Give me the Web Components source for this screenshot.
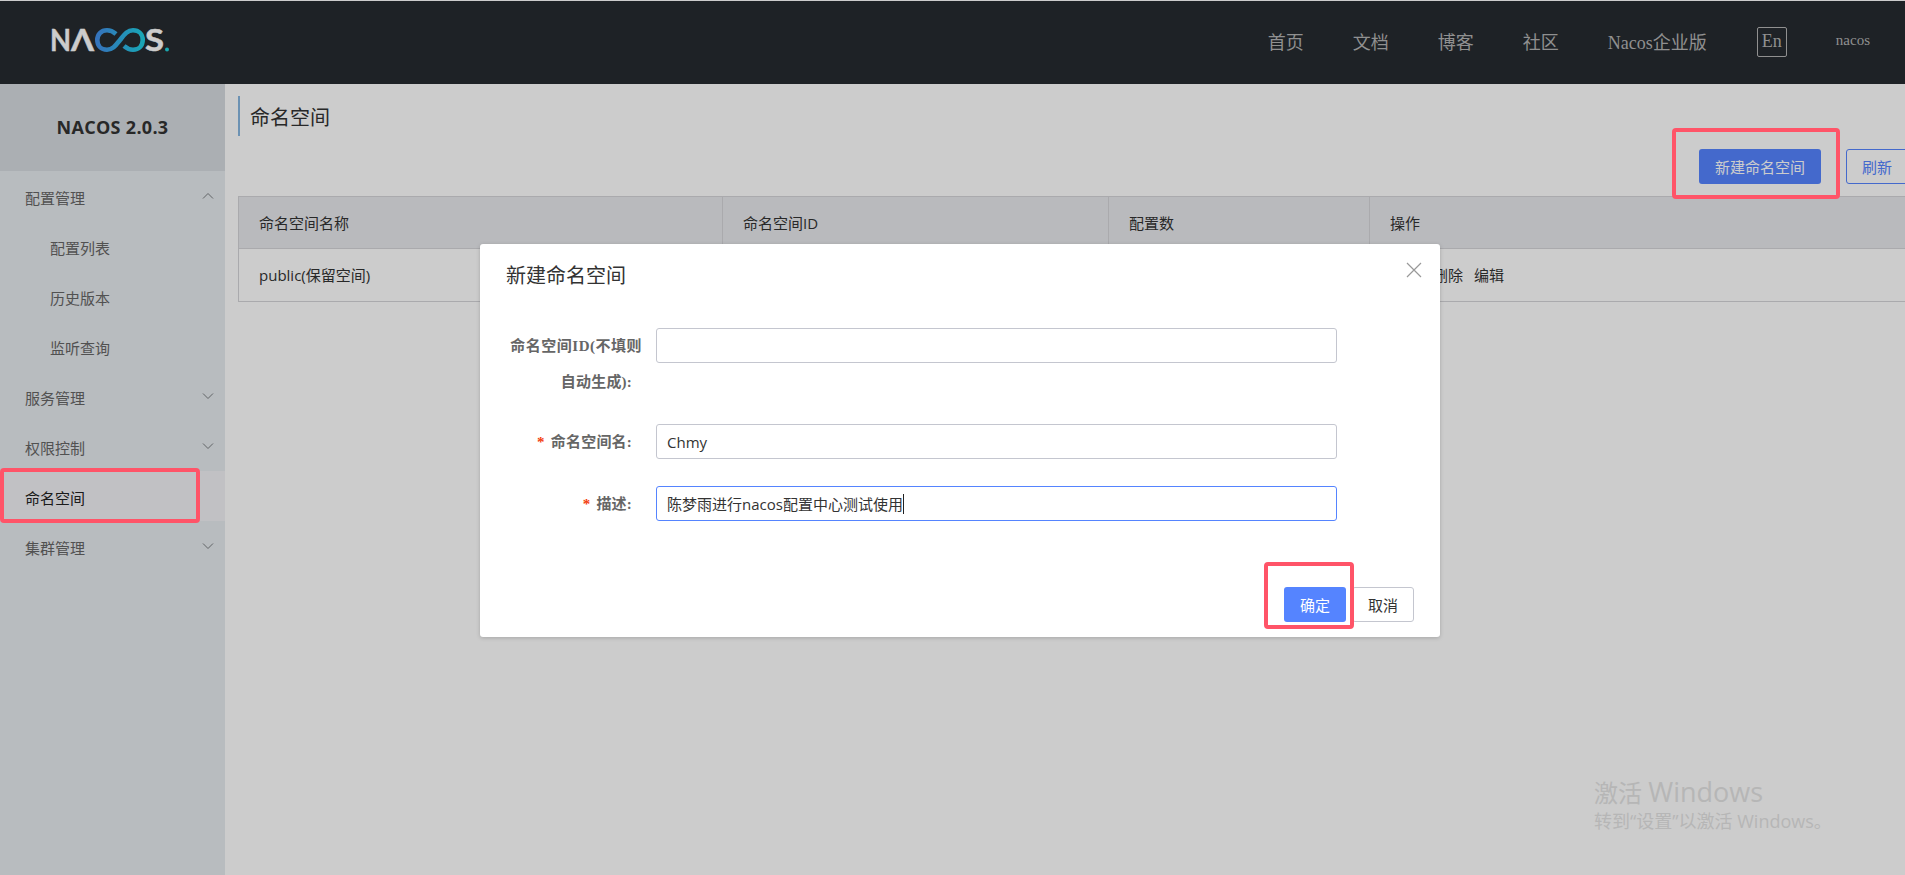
<!DOCTYPE html>
<html lang="zh">
<head>
<meta charset="utf-8">
<title>Nacos</title>
<style>
html, body { margin: 0; height: 875px; overflow: hidden; background: #fff; }
body { position: relative; font-family: "Open Sans", "Noto Sans CJK SC", sans-serif; font-size: 15px; color: #333; }
</style>
</head>
<body>
<top-header></top-header>
<div style="display:flex;height:791px">
  <side-menu>
    <side-item>配置管理<chev-icon slot="end" dir="up"></chev-icon></side-item>
    <side-item sub>配置列表</side-item>
    <side-item sub>历史版本</side-item>
    <side-item sub>监听查询</side-item>
    <side-item>服务管理<chev-icon slot="end"></chev-icon></side-item>
    <side-item>权限控制<chev-icon slot="end"></chev-icon></side-item>
    <side-item active>命名空间</side-item>
    <side-item>集群管理<chev-icon slot="end"></chev-icon></side-item>
  </side-menu>
  <namespace-page></namespace-page>
</div>
<dim-mask></dim-mask>
<namespace-dialog></namespace-dialog>
<red-mark style="left:1672px;top:128px;width:168px;height:71px"></red-mark>
<red-mark style="left:0;top:468px;width:200px;height:55px"></red-mark>
<red-mark style="left:1264px;top:562px;width:90px;height:67px"></red-mark>
<win-mark></win-mark>

<script>
const CJK = '"Noto Sans CJK SC", sans-serif'

class TopHeader extends HTMLElement {
    constructor() {
        super()
        this.attachShadow({ mode: "open" })
        this.shadowRoot.innerHTML = `
        <style>
        :host { display: flex; align-items: center; height: 83px; border-top: 1px solid #fff; background: #262b30; color: #b4b4b4; font: 18px "Liberation Serif", ${CJK}; }
        svg { display: block; margin: -6px 0 0 51px; }
        text { font-family: "Lato", "Open Sans", sans-serif; font-weight: 700; fill: #fff; stroke: #fff; stroke-width: .5; }
        nav { display: flex; align-items: center; margin-left: auto; gap: 49px; padding: 0 35px 4px 0; }
        .lang { box-sizing: border-box; width: 30px; height: 30px; line-height: 26px; text-align: center; border: 1px solid #b4b4b4; border-radius: 2px; margin: 2px 0 0 1px; }
        .user { font-size: 15px; }
        </style>
        <svg width="118" height="44" viewBox="0 -10 118 44">
          <defs><linearGradient id="inf" x1="0" x2="1" y1="0" y2="0"><stop offset="0" stop-color="#4390ea"/><stop offset="1" stop-color="#1fcfe4"/></linearGradient></defs>
          <text x="-1" y="23" font-size="31" textLength="21" lengthAdjust="spacingAndGlyphs">N</text>
          <text x="20" y="23" font-size="31" textLength="23" lengthAdjust="spacingAndGlyphs">Λ</text>
          <path transform="translate(44 0)" d="M21 6C18 3.400 15 2.300 12 2.300C6 2.300 2.300 6.500 2.300 12C2.300 17.500 6 21.700 12 21.700C18 21.700 21 17 25 12C29 7 32 2.300 38 2.300C44 2.300 47.700 6.500 47.700 12C47.700 17.500 44 21.700 38 21.700C35 21.700 32 20.600 29 18" fill="none" stroke="url(#inf)" stroke-width="4.600"/>
          <text x="94" y="23" font-size="31" textLength="19" lengthAdjust="spacingAndGlyphs">S</text>
          <circle cx="116" cy="21.500" r="2" fill="#22d3dc"/>
        </svg>
        <nav>
          <span>首页</span><span>文档</span><span>博客</span><span>社区</span><span>Nacos企业版</span>
          <span class="lang">En</span><span class="user">nacos</span>
        </nav>
        `
    }
}

class SideMenu extends HTMLElement {
    constructor() {
        super()
        this.attachShadow({ mode: "open" })
        this.shadowRoot.innerHTML = `
        <style>
        :host { display: block; flex: 0 0 225px; background: #e6ebef; }
        h1 { margin: 0; height: 87px; text-align: center; background: #d6dbe0; font: 700 18px/86px "Open Sans", ${CJK}; letter-spacing: .3px; color: #333; }
        </style>
        <h1>NACOS 2.0.3</h1>
        <slot></slot>
        `
    }
}

class SideItem extends HTMLElement {
    constructor() {
        super()
        this.attachShadow({ mode: "open" })
        this.shadowRoot.innerHTML = `
        <style>
        :host { display: flex; align-items: center; justify-content: space-between; box-sizing: border-box; height: 50px; padding: 2px 11px 0 25px; color: #666; font-size: 15px; }
        :host([sub]) { padding-left: 50px; }
        :host([active]) { background: #f2f2f6; color: #222; }
        </style>
        <span><slot></slot></span><slot name="end"></slot>
        `
    }
}

class ChevIcon extends HTMLElement {
    connectedCallback() {
        if (this.shadowRoot) return
        this.attachShadow({ mode: "open" })
        const d = this.getAttribute("dir") === "up" ? "M1 6.500L6 1.500L11 6.500" : "M1 1.500L6 6.500L11 1.500"
        this.shadowRoot.innerHTML = `
        <style>:host { display: block; margin-top: -3px; } svg { display: block; }</style>
        <svg width="12" height="8" viewBox="0 0 12 8"><path d="${d}" fill="none" stroke="#7a7d80" stroke-width="1"/></svg>
        `
    }
}

class NamespacePage extends HTMLElement {
    constructor() {
        super()
        this.attachShadow({ mode: "open" })
        this.shadowRoot.innerHTML = `
        <style>
        :host { display: block; flex: 1; min-width: 0; overflow: hidden; background: #fff; padding: 12px 0 0 13px; }
        .title { height: 40px; line-height: 42px; padding-left: 10px; border-left: 2px solid #88b7e0; font-size: 20px; color: #333; font-family: ${CJK}; }
        .tools { display: flex; gap: 25px; margin: 13px 0 0 1461px; width: 220px; }
        button { flex: none; box-sizing: border-box; height: 35px; border-radius: 3px; font: 15px ${CJK}; padding: 0; }
        .add { width: 122px; background: #5584ff; border: 0; color: #fff; }
        .refresh { width: 62px; background: #fff; border: 1px solid #5584ff; color: #5584ff; }
        .tbl { margin-top: 12px; width: 1690px; border: 1px solid #d5d5d9; border-right: 0; box-sizing: border-box; }
        .row { display: grid; grid-template-columns: 483px 386px 261px 1fr; }
        .row > div { padding-left: 20px; display: flex; align-items: center; gap: 11px; }
        .head { height: 51px; background: #e8e9ed; border-bottom: 1px solid #d5d5d9; }
        .head > div { padding-bottom: 1px; }
        .head > div + div { border-left: 1px solid #d5d5d9; }
        .body { height: 52px; }
        .body > div { padding-bottom: 2px; }
        </style>
        <div class="title">命名空间</div>
        <div class="tools"><button class="add">新建命名空间</button><button class="refresh">刷新</button></div>
        <div class="tbl">
          <div class="row head"><div>命名空间名称</div><div>命名空间ID</div><div>配置数</div><div>操作</div></div>
          <div class="row body"><div>public(保留空间)</div><div></div><div></div><div><span style="margin-right:3px">详情</span><span>删除</span><span>编辑</span></div></div>
        </div>
        `
    }
}

class DimMask extends HTMLElement {
    constructor() {
        super()
        this.attachShadow({ mode: "open" })
        this.shadowRoot.innerHTML = `<style>:host { position: absolute; inset: 0; background: rgba(0,0,0,.2); }</style>`
    }
}

class TextField extends HTMLElement {
    constructor() {
        super()
        this.attachShadow({ mode: "open" })
        this.shadowRoot.innerHTML = `
        <style>
        :host { display: flex; align-items: center; box-sizing: border-box; width: 681px; height: 35px; padding: 0 10px; background: #fff; border: 1px solid #c4c6cf; border-radius: 3px; font-size: 15px; color: #333; white-space: nowrap; }
        :host([focus]) { border-color: #5584ff; }
        i { display: none; width: 1px; height: 20px; background: #222; }
        :host([focus]) i { display: block; }
        </style>
        <slot></slot><i></i>
        `
    }
}

class NamespaceDialog extends HTMLElement {
    constructor() {
        super()
        this.attachShadow({ mode: "open" })
        this.shadowRoot.innerHTML = `
        <style>
        :host { position: absolute; left: 480px; top: 244px; box-sizing: border-box; width: 960px; height: 393px; background: #fff; border-radius: 3px; box-shadow: 0 1px 4px rgba(0,0,0,.18); display: flex; flex-direction: column; padding: 0 26px 15px 26px; }
        header { display: flex; justify-content: space-between; align-items: center; height: 60px; font: 20px ${CJK}; color: #333; }
        header svg { display: block; margin-top: -8px; margin-right: -8px; }
        form { display: grid; grid-template-columns: 126px auto; column-gap: 24px; justify-content: start; margin-top: 24px; font-size: 15px; }
        label { font: 700 15px "Liberation Serif", ${CJK}; color: #666; text-align: right; line-height: 37px; letter-spacing: .2px; }
        label b { display: block; white-space: nowrap; margin-right: -10px; font-weight: 700; line-height: 36px; letter-spacing: .5px; }
        label em { font-style: normal; color: #f33d0e; margin-right: 6px; }
        .id { height: 96px; }
        .name { height: 62px; }
        footer { display: flex; justify-content: flex-end; gap: 6px; margin-top: auto; }
        button { box-sizing: border-box; width: 62px; height: 35px; border-radius: 3px; padding: 0; font: 15px ${CJK}; }
        .ok { background: #5584ff; border: 0; color: #fff; }
        .no { background: #fff; border: 1px solid #c4c6cf; color: #333; }
        </style>
        <header>新建命名空间
          <svg width="16" height="16" viewBox="0 0 16 16"><path d="M1 1L15 15M15 1L1 15" stroke="#999" stroke-width="1.200" fill="none"/></svg>
        </header>
        <form>
          <label class="id"><b>命名空间ID(不填则</b>自动生成):</label><div><text-field></text-field></div>
          <label class="name"><em>*</em>命名空间名:</label><div><text-field>Chmy</text-field></div>
          <label><em>*</em>描述:</label><div><text-field focus>陈梦雨进行nacos配置中心测试使用</text-field></div>
        </form>
        <footer><button class="ok">确定</button><button class="no">取消</button></footer>
        `
    }
}

class RedMark extends HTMLElement {
    constructor() {
        super()
        this.attachShadow({ mode: "open" })
        this.shadowRoot.innerHTML = `<style>:host { position: absolute; box-sizing: border-box; border: 4px solid #ff5468; border-radius: 4px; }</style>`
    }
}

class WinMark extends HTMLElement {
    constructor() {
        super()
        this.attachShadow({ mode: "open" })
        this.shadowRoot.innerHTML = `
        <style>
        :host { position: absolute; left: 1594px; top: 775px; color: #b6b6b6; font-family: "Open Sans", ${CJK}; white-space: nowrap; }
        div { font-size: 24px; line-height: 33px; }
        div span { font-size: 27px; }
        p { margin: 0; font-size: 18px; line-height: 24px; }
        </style>
        <div>激活 <span>Windows</span></div>
        <p>转到“设置”以激活 Windows。</p>
        `
    }
}

customElements.define("top-header", TopHeader)
customElements.define("side-menu", SideMenu)
customElements.define("side-item", SideItem)
customElements.define("chev-icon", ChevIcon)
customElements.define("namespace-page", NamespacePage)
customElements.define("dim-mask", DimMask)
customElements.define("text-field", TextField)
customElements.define("namespace-dialog", NamespaceDialog)
customElements.define("red-mark", RedMark)
customElements.define("win-mark", WinMark)
</script>
</body>
</html>
